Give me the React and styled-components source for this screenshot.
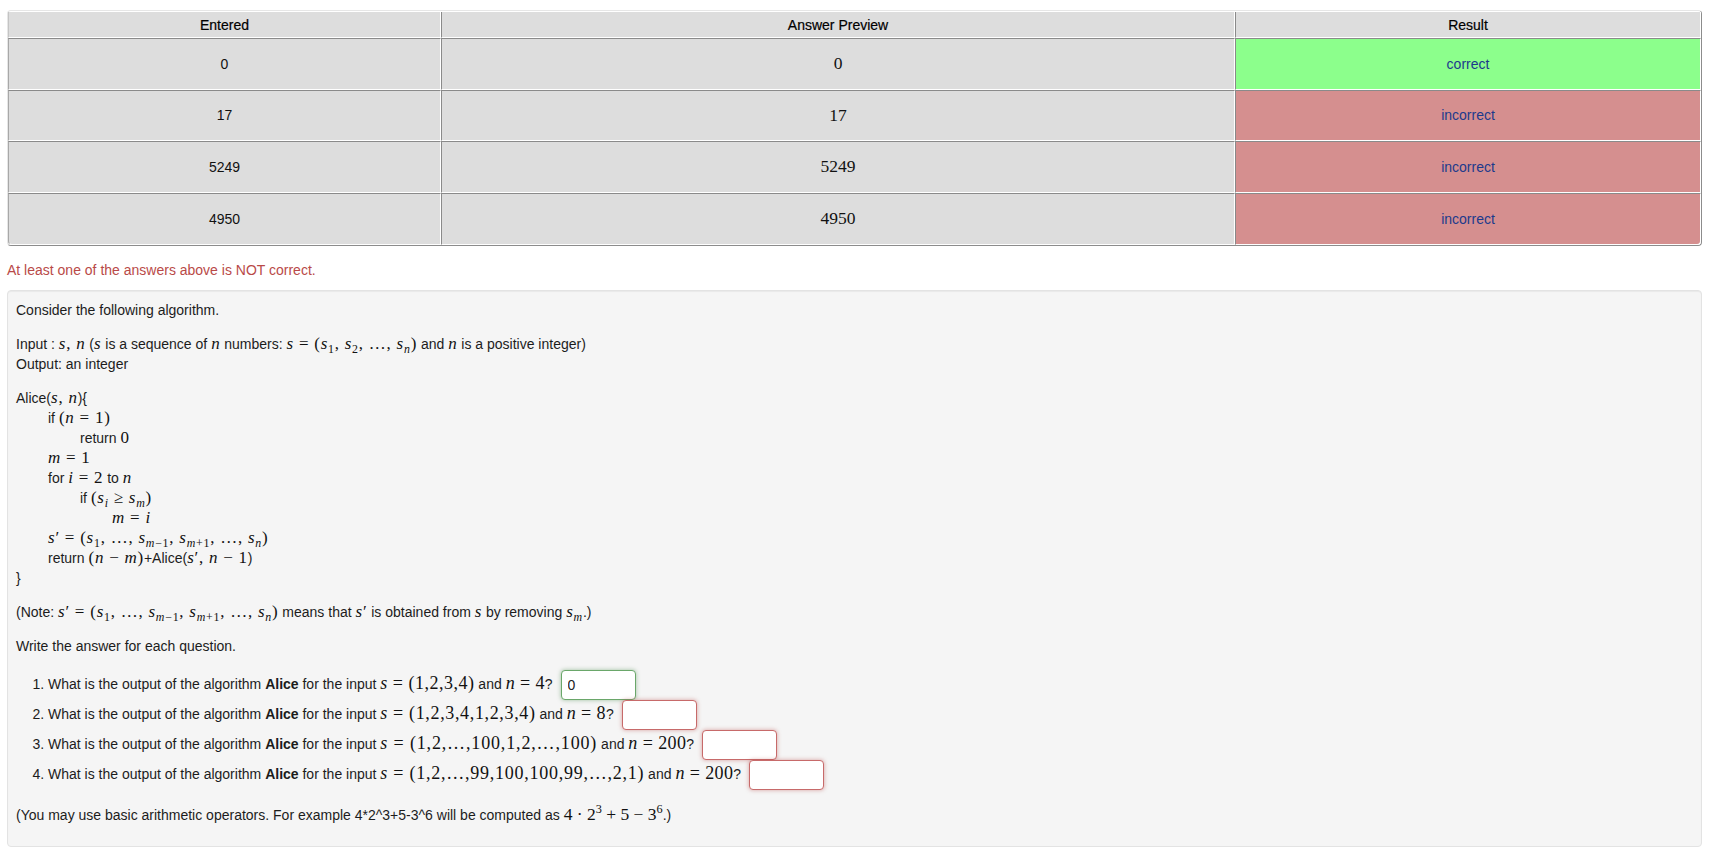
import React from 'react'
import styled, { createGlobalStyle } from 'styled-components'

const GlobalStyle = createGlobalStyle`
    html, body {
        margin: 0;
        background: #fff;
    }
    body {
        font-family: "Liberation Sans", Arial, sans-serif;
        font-size: 14px;
        line-height: 20px;
        color: #1c1c1c;
    }
`

const Page = styled.div`
    padding: 10px 11px 0 7px;
    height: 847px;
    overflow: hidden;
`

const ResultsTable = styled.table`
    width: 100%;
    border-collapse: separate;
    border-spacing: 0;
    table-layout: fixed;
    border: 1px solid #e6e6e6;
    border-bottom-color: #8c8c8c;
    border-right-color: #8c8c8c;
    border-radius: 4px;
    padding: 1px 0 0;
    margin-bottom: 14px;

    tr:last-child td:last-child {
        border-bottom-right-radius: 4px;
    }
    tr:last-child td:first-child {
        border-bottom-left-radius: 4px;
    }
`

const Column = styled.col`
    width: ${props => props.w ? props.w + 'px' : 'auto'};
`

const HeadCell = styled.th`
    height: 25px;
    padding: 0;
    background: #ddd;
    color: #000;
    font-size: 14px;
    font-weight: normal;
    -webkit-text-stroke: 0.2px #000;
    text-align: center;
    border-bottom: 1px solid #fff;
    border-right: 1px solid #fff;
    border-left: 1px solid ${props => props.first ? '#c4c4c4' : '#8a8a8a'};
`

const bgs = { correct: '#8cff8c', incorrect: '#d58f8f' }

const Cell = styled.td`
    height: ${props => props.h}px;
    padding: 0 0 1px;
    background: ${props => bgs[props.status] || '#ddd'};
    color: ${props => props.status ? '#1c3a8c' : '#111'};
    text-align: center;
    font-size: 14px;
    border-top: 1px solid #8a8a8a;
    border-bottom: 1px solid #fff;
    border-right: 1px solid #fff;
    border-left: 1px solid ${props => props.first ? '#a8a8a8' : '#8a8a8a'};
`

const Math = styled.span`
    font-family: "Liberation Serif", "DejaVu Serif", serif;
    font-size: ${props => props.size || 17}px;
    letter-spacing: ${props => props.spacing ?? 0.75}px;
    font-style: normal;
    color: #111;
    white-space: nowrap;
    i { font-style: italic; }
    sub, sup { font-size: 70%; line-height: 0; }
`

const Warning = styled.div`
    color: #b94a48;
    margin: 0 0 10px;
    height: 20px;
`

const ProblemBox = styled.div`
    background: #f5f5f5;
    border: 1px solid #e3e3e3;
    border-radius: 4px;
    box-shadow: inset 0 1px 1px rgba(0,0,0,0.05);
    padding: 9px 9px 8px 8px;
`

const Para = styled.p`
    margin: 0 0 ${props => props.gap ?? 14}px;
    height: 20px;
    line-height: 20px;
    white-space: nowrap;
`

const Line = styled.div`
    height: 20px;
    line-height: 20px;
    white-space: nowrap;
    padding-left: ${props => (props.indent || 0) * 32}px;
`

const Questions = styled.ol`
    margin: 0 0 16px;
    padding: 0 0 0 32px;
`

const Question = styled.li`
    height: 30px;
    line-height: 30px;
    white-space: nowrap;
`

const AnswerInput = styled.input`
    box-sizing: border-box;
    width: 75px;
    height: 30px;
    margin-left: 8px;
    padding: 4px 6px;
    vertical-align: middle;
    background: #fff;
    color: #222;
    font: 14px/20px "Liberation Sans", Arial, sans-serif;
    border: 1px solid ${props => props.ok ? '#6aa76a' : '#c76a6a'};
    border-radius: 4px;
    box-shadow: 0 0 4px ${props => props.ok ? 'rgba(70,136,71,0.5)' : 'rgba(185,74,72,0.5)'};
`

const rows = [
    ['0', 'correct', 49],
    ['17', 'incorrect', 48],
    ['5249', 'incorrect', 49],
    ['4950', 'incorrect', 49],
]

const questions = [
    ['(1,2,3,4)', '4', '0', true, 0.5],
    ['(1,2,3,4,1,2,3,4)', '8', '', false, 0.65],
    ['(1,2,…,100,1,2,…,100)', '200', '', false, 0.85],
    ['(1,2,…,99,100,100,99,…,2,1)', '200', '', false, 0.75],
]

const seqPrime = <Math>(<i>s</i><sub>1</sub>, …, <i>s</i><sub><i>m</i>−1</sub>, <i>s</i><sub><i>m</i>+1</sub>, …, <i>s<sub>n</sub></i>)</Math>

export default function App() {
    return (
        <Page>
            <GlobalStyle />
            <ResultsTable>
                <colgroup>
                    <Column w={433} />
                    <Column w={794} />
                    <Column />
                </colgroup>
                <thead>
                    <tr>
                        <HeadCell first>Entered</HeadCell>
                        <HeadCell>Answer Preview</HeadCell>
                        <HeadCell>Result</HeadCell>
                    </tr>
                </thead>
                <tbody>
                    {rows.map(([value, status, h], i) => (
                        <tr key={i}>
                            <Cell first h={h}>{value}</Cell>
                            <Cell h={h}><Math size={17.5} spacing={0}>{value}</Math></Cell>
                            <Cell h={h} status={status}>{status}</Cell>
                        </tr>
                    ))}
                </tbody>
            </ResultsTable>
            <Warning>At least one of the answers above is NOT correct.</Warning>
            <ProblemBox>
                <Para>Consider the following algorithm.</Para>
                <Line>Input : <Math><i>s</i>, <i>n</i></Math> (<Math><i>s</i></Math> is a sequence of <Math><i>n</i></Math> numbers: <Math><i>s</i> = (<i>s</i><sub>1</sub>, <i>s</i><sub>2</sub>, …, <i>s<sub>n</sub></i>)</Math> and <Math><i>n</i></Math> is a positive integer)</Line>
                <Para>Output: an integer</Para>
                <Line>Alice(<Math><i>s</i>, <i>n</i></Math>){'{'}</Line>
                <Line indent={1}>if <Math>(<i>n</i> = 1)</Math></Line>
                <Line indent={2}>return <Math>0</Math></Line>
                <Line indent={1}><Math><i>m</i> = 1</Math></Line>
                <Line indent={1}>for <Math><i>i</i> = 2</Math> to <Math><i>n</i></Math></Line>
                <Line indent={2}>if <Math>(<i>s<sub>i</sub></i> ≥ <i>s<sub>m</sub></i>)</Math></Line>
                <Line indent={3}><Math><i>m</i> = <i>i</i></Math></Line>
                <Line indent={1}><Math><i>s</i>′ = </Math>{seqPrime}</Line>
                <Line indent={1}>return <Math>(<i>n</i> − <i>m</i>)</Math>+Alice(<Math><i>s</i>′, <i>n</i> − 1</Math>)</Line>
                <Para>{'}'}</Para>
                <Para>(Note: <Math><i>s</i>′ = </Math>{seqPrime} means that <Math><i>s</i>′</Math> is obtained from <Math><i>s</i></Math> by removing <Math><i>s<sub>m</sub></i></Math>.)</Para>
                <Para gap={12}>Write the answer for each question.</Para>
                <Questions>
                    {questions.map(([seq, n, value, ok, spacing], i) => (
                        <Question key={i}>
                            What is the output of the algorithm <b>Alice</b> for the input <Math size={18} spacing={spacing}><i>s</i> = {seq}</Math> and <Math size={18} spacing={0.4}><i>n</i> = {n}</Math>?
                            <AnswerInput ok={ok} defaultValue={value} />
                        </Question>
                    ))}
                </Questions>
                <Para>(You may use basic arithmetic operators. For example 4*2^3+5-3^6 will be computed as <Math size={17.5} spacing={0}>4 · 2<sup>3</sup> + 5 − 3<sup>6</sup></Math>.)</Para>
            </ProblemBox>
        </Page>
    )
}
